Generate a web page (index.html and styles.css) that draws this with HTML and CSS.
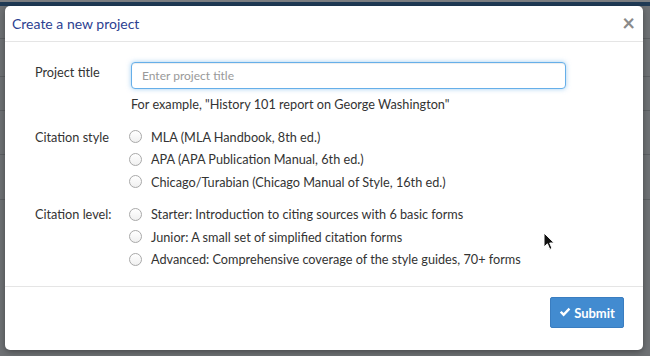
FILE: index.html
```html
<!DOCTYPE html>
<html lang="en">

<head>
    <meta charset="UTF-8">
    <title>Create a new project</title>
    <link rel="stylesheet" href="styles.css">
</head>

<body>
    <div class="topbar"></div>
    <div class="modal">
        <div class="modal-header">
            <h4 class="modal-title">Create a new project</h4>
            <span class="close">&times;</span>
        </div>
        <div class="modal-body">
            <div class="form-row">
                <label class="form-label label-input">Project title</label>
                <div class="form-field">
                    <input class="text-input" type="text" placeholder="Enter project title">
                    <p class="help">For example, "History 101 report on George Washington"</p>
                </div>
            </div>
            <div class="form-row">
                <label class="form-label">Citation style</label>
                <div class="form-field">
                    <div class="radio"><span class="circle"></span>MLA (MLA Handbook, 8th ed.)</div>
                    <div class="radio"><span class="circle"></span>APA (APA Publication Manual, 6th ed.)</div>
                    <div class="radio"><span class="circle"></span>Chicago/Turabian (Chicago Manual of Style, 16th ed.)</div>
                </div>
            </div>
            <div class="form-row">
                <label class="form-label">Citation level:</label>
                <div class="form-field">
                    <div class="radio"><span class="circle"></span>Starter: Introduction to citing sources with 6 basic forms</div>
                    <div class="radio"><span class="circle"></span>Junior: A small set of simplified citation forms</div>
                    <div class="radio"><span class="circle"></span>Advanced: Comprehensive coverage of the style guides, 70+ forms</div>
                </div>
            </div>
        </div>
        <div class="modal-footer">
            <button class="btn-submit">
                <svg width="12" height="11" viewBox="0 0 12 11"><path d="M0.8 5.6 L2.6 3.9 L4.6 6 L9.6 0.8 L11.3 2.5 L4.6 9.4 Z" fill="#fff"/></svg>
                Submit
            </button>
        </div>
        <svg class="cursor" width="14" height="20" viewBox="0 0 14 20">
            <path d="M1 1 L1 15 L4.4 11.8 L6.8 17.4 L9 16.4 L6.7 11 L11.2 11 Z" fill="#111" stroke="#fff" stroke-width="1"/>
        </svg>
    </div>
</body>

</html>
```

FILE: styles.css
```css
* {
    margin: 0;
    padding: 0;
    box-sizing: border-box;
}

body {
    width: 650px;
    height: 356px;
    overflow: hidden;
    font-family: Lato, "Open Sans", sans-serif;
    color: #333;
    background-color: #6e7174;
    background-image:
        linear-gradient(#5d6063, #5d6063),
        linear-gradient(#5d6063, #5d6063),
        linear-gradient(#5d6063, #5d6063),
        linear-gradient(#5d6063, #5d6063),
        linear-gradient(#5d6063, #5d6063);
    background-size: 100% 1px;
    background-repeat: no-repeat;
    background-position: 0 38px, 0 76px, 0 110px, 0 154px, 0 199px;
}

.topbar {
    height: 6px;
    border-top: 2px solid #7b7d80;
    background-color: #1f3a55;
}

.modal {
    position: relative;
    width: 638px;
    height: 344px;
    margin-left: 5px;
    background-color: #fff;
    border-radius: 5px;
    box-shadow: 0 2px 6px rgba(0, 0, 0, 0.35);
    display: flex;
    flex-direction: column;
}

.modal-header {
    flex-shrink: 0;
    height: 36px;
    padding: 0 8px 0 7px;
    display: flex;
    align-items: center;
    justify-content: space-between;
    border-bottom: 1px solid #e5e5e5;
}

.modal-title {
    font-size: 14px;
    font-weight: normal;
    color: #2b4191;
}

.close {
    font-size: 22px;
    font-weight: bold;
    color: #8a8a8a;
    line-height: 1;
    margin-top: -1px;
}

.modal-body {
    flex: 1;
    padding: 20px 0 0 30px;
}

.form-row {
    display: grid;
    grid-template-columns: 96px 1fr;
    margin-bottom: 10px;
    font-size: 12.7px;
}

.form-label {
    line-height: 22.5px;
}

.label-input {
    line-height: 20px;
}

.text-input {
    display: block;
    width: 435px;
    height: 27px;
    padding: 0 10px;
    font-family: Lato, sans-serif;
    font-size: 12px;
    color: #555;
    border: 1px solid #66afe9;
    border-radius: 4px;
    outline: none;
    box-shadow: inset 0 1px 1px rgba(0, 0, 0, 0.075), 0 0 5px rgba(102, 175, 233, 0.6);
}

.text-input::placeholder {
    color: #999;
}

.help {
    margin-top: 4px;
    line-height: 22.5px;
}

.radio {
    display: flex;
    align-items: center;
    height: 22.5px;
    margin-left: -2px;
}

.circle {
    width: 13px;
    height: 13px;
    margin-right: 9px;
    border: 1px solid #a9a9a9;
    border-radius: 50%;
    background: linear-gradient(#fff, #f0f0f0);
}

.modal-footer {
    flex-shrink: 0;
    height: 64px;
    padding: 10px 19px 0 0;
    border-top: 1px solid #e5e5e5;
    display: flex;
    justify-content: flex-end;
    align-items: flex-start;
}

.btn-submit {
    width: 74px;
    height: 31px;
    display: flex;
    align-items: center;
    justify-content: center;
    gap: 3px;
    font-family: Lato, sans-serif;
    font-size: 13px;
    font-weight: bold;
    color: #fff;
    background-color: #428bd0;
    border: 1px solid #3a7dc0;
    border-radius: 2px;
}

.cursor {
    position: absolute;
    left: 538px;
    top: 226px;
}
```
